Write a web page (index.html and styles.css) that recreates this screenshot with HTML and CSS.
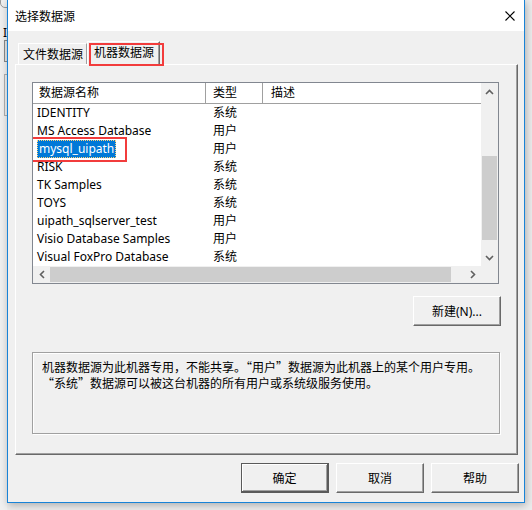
FILE: index.html
```html
<!DOCTYPE html>
<html lang="zh-CN">
<head>
  <meta charset="UTF-8">
  <title>选择数据源</title>
  <link rel="stylesheet" href="styles.css">
</head>
<body>
  <div class="behind">
    <div class="behind-corner"></div>
    <div class="behind-label">I</div>
    <div class="behind-box"></div>
    <div class="behind-box second"></div>
  </div>

  <div class="dialog">
    <div class="titlebar">
      <span class="title">选择数据源</span>
      <svg class="close" width="10" height="10" viewBox="0 0 10 10">
        <path d="M0.5 0.5 L9.5 9.5 M9.5 0.5 L0.5 9.5" stroke="#000" stroke-width="1.1" fill="none"/>
      </svg>
    </div>

    <div class="dlg-body">
      <div class="tabs">
        <div class="tab">文件数据源</div>
        <div class="tab active">机器数据源<span class="mark tab-mark"></span></div>
      </div>

      <div class="panel">
        <div class="listview">
          <div class="lv-main">
            <div class="lv-head">
              <div class="hcol c1">数据源名称</div>
              <div class="hcol c2">类型</div>
              <div class="hcol c3">描述</div>
            </div>
            <div class="lv-row"><span class="c1">IDENTITY</span><span class="c2">系统</span></div>
            <div class="lv-row"><span class="c1">MS Access Database</span><span class="c2">用户</span></div>
            <div class="lv-row">
              <span class="c1"><span class="selected">mysql_uipath</span></span><span class="c2">用户</span>
              <span class="mark row-mark"></span>
            </div>
            <div class="lv-row"><span class="c1">RISK</span><span class="c2">系统</span></div>
            <div class="lv-row"><span class="c1">TK Samples</span><span class="c2">系统</span></div>
            <div class="lv-row"><span class="c1">TOYS</span><span class="c2">系统</span></div>
            <div class="lv-row"><span class="c1">uipath_sqlserver_test</span><span class="c2">用户</span></div>
            <div class="lv-row"><span class="c1">Visio Database Samples</span><span class="c2">用户</span></div>
            <div class="lv-row"><span class="c1">Visual FoxPro Database</span><span class="c2">系统</span></div>
          </div>

          <div class="vscroll">
            <div class="arrow">
              <svg width="9" height="6" viewBox="0 0 9 6"><path d="M1 5 L4.5 1.5 L8 5" stroke="#606060" stroke-width="1.6" fill="none"/></svg>
            </div>
            <div class="vtrack"><div class="vthumb"></div></div>
            <div class="arrow">
              <svg width="9" height="6" viewBox="0 0 9 6"><path d="M1 1 L4.5 4.5 L8 1" stroke="#606060" stroke-width="1.6" fill="none"/></svg>
            </div>
          </div>

          <div class="hscroll">
            <div class="arrow">
              <svg width="6" height="9" viewBox="0 0 6 9"><path d="M5 1 L1.5 4.5 L5 8" stroke="#606060" stroke-width="1.6" fill="none"/></svg>
            </div>
            <div class="htrack"><div class="hthumb"></div></div>
            <div class="arrow">
              <svg width="6" height="9" viewBox="0 0 6 9"><path d="M1 1 L4.5 4.5 L1 8" stroke="#606060" stroke-width="1.6" fill="none"/></svg>
            </div>
          </div>

          <div class="corner"></div>
        </div>

        <div class="actions">
          <button class="btn">新建(N)...</button>
        </div>

        <div class="desc">
          机器数据源为此机器专用，不能共享。“用户”数据源为此机器上的某个用户专用。<br>
          “系统”数据源可以被这台机器的所有用户或系统级服务使用。
        </div>
      </div>

      <div class="footer">
        <button class="btn default">确定</button>
        <button class="btn">取消</button>
        <button class="btn">帮助</button>
      </div>
    </div>
  </div>
</body>
</html>
```

FILE: styles.css
```css
body {
  margin: 0;
  width: 532px;
  height: 510px;
  overflow: hidden;
  display: flex;
  align-items: flex-start;
  background: #ececec;
  font-family: "Noto Sans", "Noto Sans CJK SC", sans-serif;
  font-size: 12px;
  color: #000;
}

/* window underneath the dialog */
.behind {
  width: 7px;
  height: 510px;
  flex: none;
  position: relative;
  background: #f0f0f0;
}

.behind-corner {
  position: absolute;
  left: 0;
  top: -4px;
  width: 10px;
  height: 10px;
  border: 1px solid #9a9a9a;
  border-radius: 5px;
}

.behind-label {
  position: absolute;
  left: 3px;
  top: 24px;
  font-size: 12px;
}

.behind-box {
  position: absolute;
  left: 4px;
  top: 40px;
  width: 10px;
  height: 20px;
  border: 1px solid #8a8a8a;
  background: #e6e6e6;
}

.behind-box.second {
  top: 74px;
  height: 40px;
  border-color: #b0b0b0;
  background: #f0f0f0;
}

/* dialog frame */
.dialog {
  width: 516px;
  height: 502px;
  flex: none;
  display: flex;
  flex-direction: column;
  background: #f0f0f0;
  border: 1px solid #1883d7;
  border-top: none;
  box-shadow: 1px 2px 8px rgba(0, 0, 0, 0.28);
  position: relative;
  z-index: 1;
}

.titlebar {
  height: 31px;
  flex: none;
  display: flex;
  align-items: center;
  padding-left: 7px;
  background: #fff;
}

.close {
  margin-left: auto;
  margin-right: 9px;
}

.dlg-body {
  flex: 1;
  display: flex;
  flex-direction: column;
  padding: 10px 6px 0 7px;
}

/* tabs */
.tabs {
  height: 23px;
  display: flex;
  align-items: flex-end;
  padding-left: 3px;
}

.tab {
  box-sizing: border-box;
  height: 21px;
  width: 69px;
  padding-left: 4px;
  line-height: 21px;
  border-top: 1px solid #fff;
  border-left: 1px solid #fff;
  border-right: 1px solid #a0a0a0;
  white-space: nowrap;
}

.tab.active {
  position: relative;
  z-index: 2;
  height: 24px;
  width: 73px;
  margin-bottom: -1px;
  padding-left: 6px;
  line-height: 21px;
  background: #f0f0f0;
  border-right: 1px solid #696969;
  box-shadow: inset -1px 0 0 #a0a0a0;
}

.mark {
  position: absolute;
  border: 2px solid #f23c3c;
  box-sizing: border-box;
}

.tab-mark {
  left: 1px;
  top: 1px;
  width: 75px;
  height: 23px;
}

/* tab page */
.panel {
  box-sizing: border-box;
  height: 391px;
  padding: 17px 0 0 16px;
  border-top: 1px solid #fff;
  border-left: 1px solid #fff;
  border-right: 1px solid #696969;
  border-bottom: 1px solid #696969;
  box-shadow: inset -1px -1px 0 #a0a0a0;
}

.listview {
  box-sizing: border-box;
  width: 467px;
  height: 202px;
  display: grid;
  grid-template-columns: 1fr 17px;
  grid-template-rows: 1fr 17px;
  border: 1px solid #828790;
  background: #fff;
}

.lv-main {
  overflow: hidden;
}

.lv-head {
  height: 20px;
  display: flex;
  border-bottom: 1px solid #a0a0a0;
  background: #fff;
}

.hcol {
  box-sizing: border-box;
  line-height: 20px;
  padding-left: 6px;
  border-right: 1px solid #a0a0a0;
}

.hcol.c1 {
  width: 173px;
}

.hcol.c2 {
  width: 57px;
  padding-left: 7px;
}

.hcol.c3 {
  flex: 1;
  padding-left: 8px;
  border-right: none;
}

.lv-row {
  position: relative;
  height: 18px;
  display: flex;
  line-height: 18px;
  white-space: nowrap;
}

.lv-row .c1 {
  width: 173px;
  padding-left: 2px;
  box-sizing: border-box;
  text-indent: 2px;
}

.lv-row .c2 {
  padding-left: 7px;
}

.selected {
  display: inline-block;
  text-indent: 0;
  padding: 0 2px;
  background: #0078d7;
  color: #fff;
  outline: 1px dotted #ffd27a;
  outline-offset: -1px;
}

.row-mark {
  left: -5px;
  top: -3px;
  width: 99px;
  height: 25px;
}

/* scroll bars */
.vscroll {
  display: flex;
  flex-direction: column;
  background: #f0f0f0;
}

.vscroll .arrow {
  height: 17px;
  display: flex;
  align-items: center;
  justify-content: center;
}

.vtrack {
  flex: 1;
  padding-top: 56px;
}

.vthumb {
  height: 84px;
  margin: 0 1px;
  background: #cdcdcd;
}

.hscroll {
  display: flex;
  background: #f0f0f0;
}

.hscroll .arrow {
  width: 17px;
  display: flex;
  align-items: center;
  justify-content: center;
}

.htrack {
  flex: 1;
  display: flex;
  padding-right: 13px;
}

.hthumb {
  flex: 1;
  margin: 1px 0;
  background: #cdcdcd;
}

.corner {
  background: #f0f0f0;
}

/* buttons */
.actions {
  width: 469px;
  margin-top: 12px;
  display: flex;
  justify-content: flex-end;
}

.btn {
  box-sizing: border-box;
  width: 88px;
  height: 30px;
  padding: 0;
  font: inherit;
  color: #000;
  background: #f0f0f0;
  border: 1px solid;
  border-color: #fff #696969 #696969 #fff;
  box-shadow: inset -1px -1px 0 #a0a0a0;
}

.btn.default {
  border: 1px solid #5a5a5a;
  border-bottom-width: 2px;
  border-right-width: 2px;
  box-shadow: inset 1px 1px 0 #fff, inset -1px -1px 0 #a0a0a0;
}

.desc {
  box-sizing: border-box;
  width: 468px;
  height: 82px;
  margin-top: 26px;
  padding: 6px 0 0 9px;
  line-height: 16px;
  font-family: "Noto Sans CJK SC", sans-serif;
  border: 1px solid #a0a0a0;
  box-shadow: 1px 1px 0 #fff, inset 1px 1px 0 #fff;
}

.footer {
  display: flex;
  justify-content: flex-end;
  gap: 7px;
  margin-top: 8px;
  margin-right: -1px;
}
```
